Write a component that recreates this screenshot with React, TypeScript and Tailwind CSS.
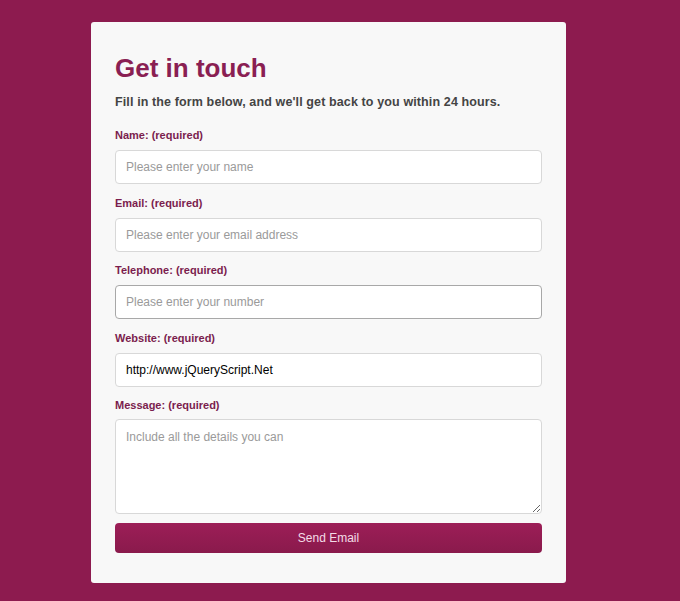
import React from 'react'

const fields = [
  { label: 'Name: (required)', placeholder: 'Please enter your name' },
  { label: 'Email: (required)', placeholder: 'Please enter your email address' },
  { label: 'Telephone: (required)', placeholder: 'Please enter your number', focus: true },
  { label: 'Website: (required)', placeholder: '', value: 'http://www.jQueryScript.Net' },
]

const App = () => {
  return (
    <div className="min-h-[601px] w-full bg-[#8d1b4f] pt-[22px] font-['Liberation_Sans',Arial,sans-serif]">
      <div className="ml-[91px] w-[475px] h-[561px] rounded-[3px] bg-[#f8f8f8] px-[24px] pt-[29px]">
        {/* Heading */}
        <h1 className="text-[26px] leading-[34px] font-bold text-[#8a1f53]">Get in touch</h1>
        <p className="mt-[9px] text-[12.5px] leading-[16px] font-bold text-[#444] tracking-[0.12px]">
          Fill in the form below, and we'll get back to you within 24 hours.
        </p>

        <form className="mt-[17px] flex flex-col" onSubmit={(e) => e.preventDefault()}>
          {fields.map((f) => (
            <div key={f.label} className="mb-[10.5px]">
              <label className="block text-[11px] leading-[16px] font-bold text-[#7b1d4e] mb-[7px]">{f.label}</label>
              <input
                className={`block w-[427px] h-[34px] rounded-[4px] bg-white px-[10px] text-[12px] text-black placeholder:text-[#9a9a9a] outline-none border ${
                  f.focus ? 'border-[#a8a8a8]' : 'border-[#d8d8d8]'
                }`}
                type="text"
                placeholder={f.placeholder}
                defaultValue={f.value}
              />
            </div>
          ))}

          <div>
            <label className="block text-[11px] leading-[16px] font-bold text-[#7b1d4e] mb-[6px]">Message: (required)</label>
            <textarea
              className="block w-[427px] h-[95px] rounded-[4px] bg-white border border-[#d8d8d8] px-[10px] py-[8px] text-[12px] placeholder:text-[#9a9a9a] outline-none"
              placeholder="Include all the details you can"
            />
          </div>

          <button
            type="submit"
            className="mt-[9px] w-[427px] h-[30px] rounded-[4px] bg-gradient-to-b from-[#9c1e57] to-[#8a1a4c] text-[12px] text-[#f3dce7]"
          >
            Send Email
          </button>
        </form>
      </div>
    </div>
  )
}

export default App
